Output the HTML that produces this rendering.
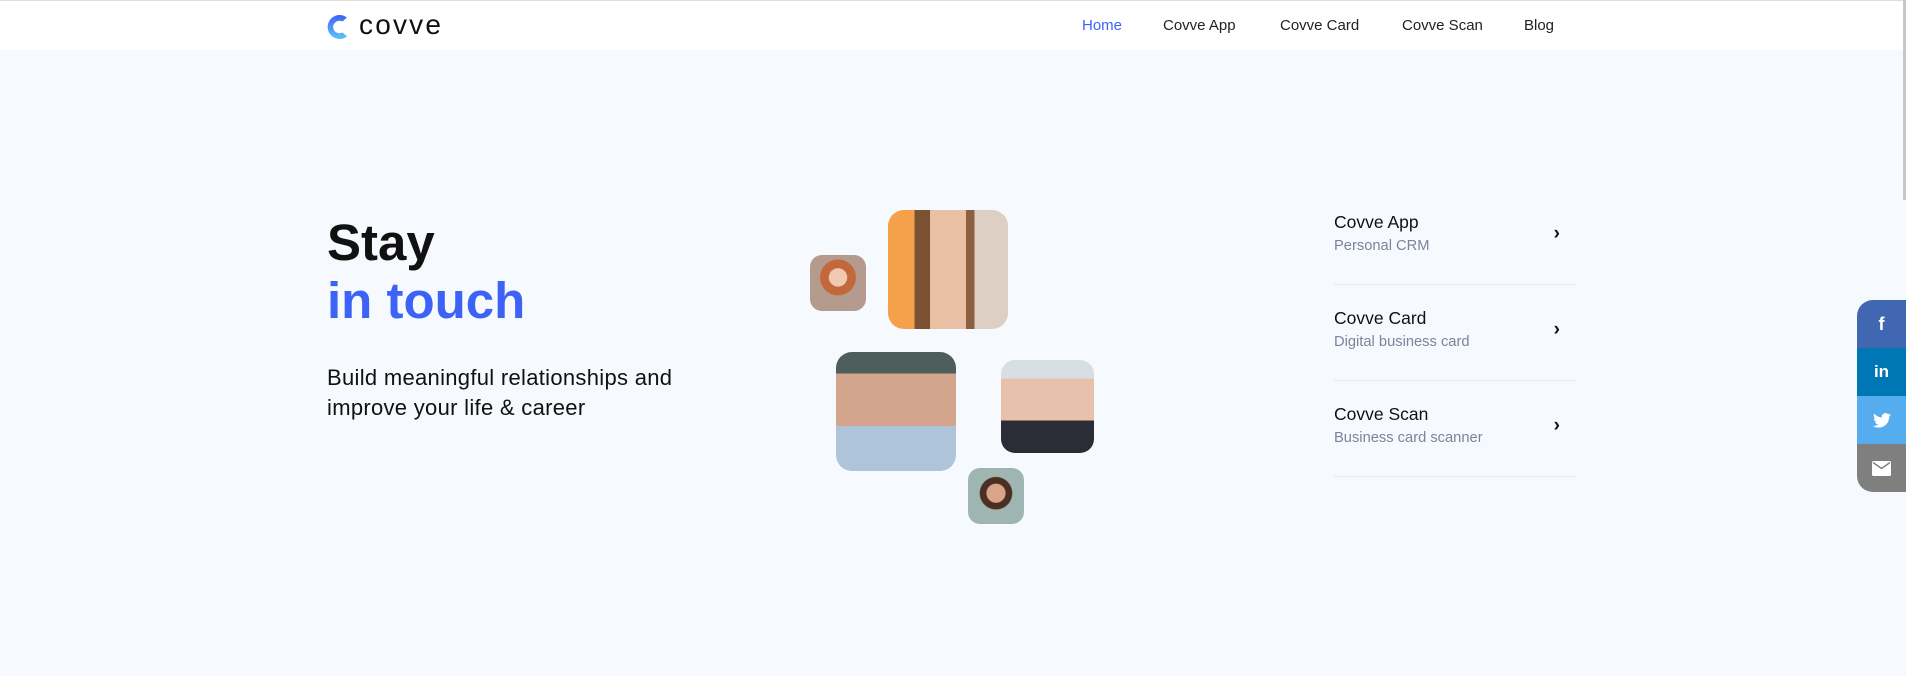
<!DOCTYPE html>
<html><head><meta charset="utf-8"><style>
*{margin:0;padding:0;box-sizing:border-box}
body{width:1906px;height:676px;background:#f6f9fe;font-family:"Liberation Sans",sans-serif;position:relative;overflow:hidden;color:#111}
.nav{position:absolute;left:0;top:0;width:1906px;height:50px;background:#fff;border-top:1px solid #ddd}
.nav a{position:absolute;top:16px;font-size:15px;color:#222;text-decoration:none}
.logo{position:absolute;left:326px;top:12px}
.brand{position:absolute;left:359px;top:8px;font-size:28px;color:#111;letter-spacing:2.2px}
h1{position:absolute;left:327px;font-size:51px;font-weight:bold;line-height:1}
p.lead{position:absolute;left:327px;top:363px;font-size:22px;line-height:30px;color:#111;letter-spacing:0.3px}
.ph{position:absolute;overflow:hidden}
.item{position:absolute;left:1334px;width:242px;border-bottom:1px solid #e3e6ec;height:96px}
.item .t{position:absolute;top:23px;font-size:17.5px;color:#111}
.item .s{position:absolute;top:49px;font-size:14.7px;color:#7b8499}
.item .c{position:absolute;right:16px;top:34px;font-size:19px;font-weight:bold}
.soc{position:absolute;left:1857px;width:49px;height:48px;display:flex;align-items:center;justify-content:center;color:#fff;font-weight:bold}
</style></head><body>
<div class="nav">
<svg class="logo" width="24" height="28" viewBox="0 0 24 27"><defs><linearGradient id="g" x1="0" y1="0" x2="0" y2="1"><stop offset="0" stop-color="#3d63f5"/><stop offset="1" stop-color="#5ec3f5"/></linearGradient></defs><path d="M21 4 A12 12 0 1 0 21 23 L16.5 19 A6.3 6.3 0 1 1 16.5 8 Z" fill="url(#g)"/></svg>
<div class="brand">covve</div>
<a style="left:1082px;color:#3d63ff">Home</a>
<a style="left:1163px">Covve App</a>
<a style="left:1280px">Covve Card</a>
<a style="left:1402px">Covve Scan</a>
<a style="left:1524px">Blog</a>
</div>
<h1 style="top:217px">Stay</h1>
<h1 style="top:275px;color:#3c62f6">in touch</h1>
<p class="lead">Build meaningful relationships and<br>improve your life &amp; career</p>

<div class="ph" style="left:810px;top:255px;width:56px;height:56px;border-radius:12px;background:radial-gradient(circle at 50% 40%,#f1c9b2 0 20%,#c2683a 22% 40%,#b49b8d 42%)"></div>
<div class="ph" style="left:888px;top:210px;width:120px;height:119px;border-radius:16px;background:linear-gradient(90deg,#f5a04b 0 22%,#7a5232 22% 35%,#e9c0a3 35% 65%,#8a6040 65% 72%,#ddcfc3 72%)"></div>
<div class="ph" style="left:836px;top:352px;width:120px;height:119px;border-radius:16px;background:linear-gradient(180deg,#4e5e5a 0 18%,#d3a58c 18% 62%,#aec4d8 62%);"></div>
<div class="ph" style="left:1001px;top:360px;width:93px;height:93px;border-radius:14px;background:linear-gradient(180deg,#d8dfe4 0 20%,#e7c1ac 20% 65%,#2b2d36 65%)"></div>
<div class="ph" style="left:968px;top:468px;width:56px;height:56px;border-radius:12px;background:radial-gradient(circle at 50% 45%,#d9a48a 0 22%,#4a2f22 24% 38%,#9fb5b1 40%)"></div>

<div class="item" style="top:189px"><div class="t">Covve App</div><div class="s">Personal CRM</div><div class="c">›</div></div>
<div class="item" style="top:285px"><div class="t">Covve Card</div><div class="s">Digital business card</div><div class="c">›</div></div>
<div class="item" style="top:381px"><div class="t">Covve Scan</div><div class="s">Business card scanner</div><div class="c">›</div></div>

<div class="soc" style="top:300px;background:#4267b2;border-top-left-radius:16px;font-size:18px">f</div>
<div class="soc" style="top:348px;background:#0077b5;font-size:17px">in</div>
<div class="soc" style="top:396px;background:#55acee"><svg width="18" height="15" viewBox="0 0 24 20"><path fill="#fff" d="M24 2.4a10 10 0 0 1-2.8.8A5 5 0 0 0 23.3.5a10 10 0 0 1-3.1 1.2A4.9 4.9 0 0 0 11.8 6 14 14 0 0 1 1.7.9a4.9 4.9 0 0 0 1.5 6.6A4.9 4.9 0 0 1 1 6.9a4.9 4.9 0 0 0 3.9 4.8 5 5 0 0 1-2.2.1 4.9 4.9 0 0 0 4.6 3.4A9.9 9.9 0 0 1 0 17.3 14 14 0 0 0 7.5 19.5c9 0 14-7.5 14-14v-.6A10 10 0 0 0 24 2.4z"/></svg></div>
<div class="soc" style="top:444px;background:#7f7f7f;border-bottom-left-radius:16px"><svg width="19" height="15" viewBox="0 0 19 15"><rect width="19" height="15" rx="1.5" fill="#fff"/><path d="M1 1.5l8.5 6 8.5-6" stroke="#7f7f7f" stroke-width="1.4" fill="none"/></svg></div>
<div style="position:absolute;right:0;top:0;width:3px;height:200px;background:#c8c8c8"></div>
</body></html>
